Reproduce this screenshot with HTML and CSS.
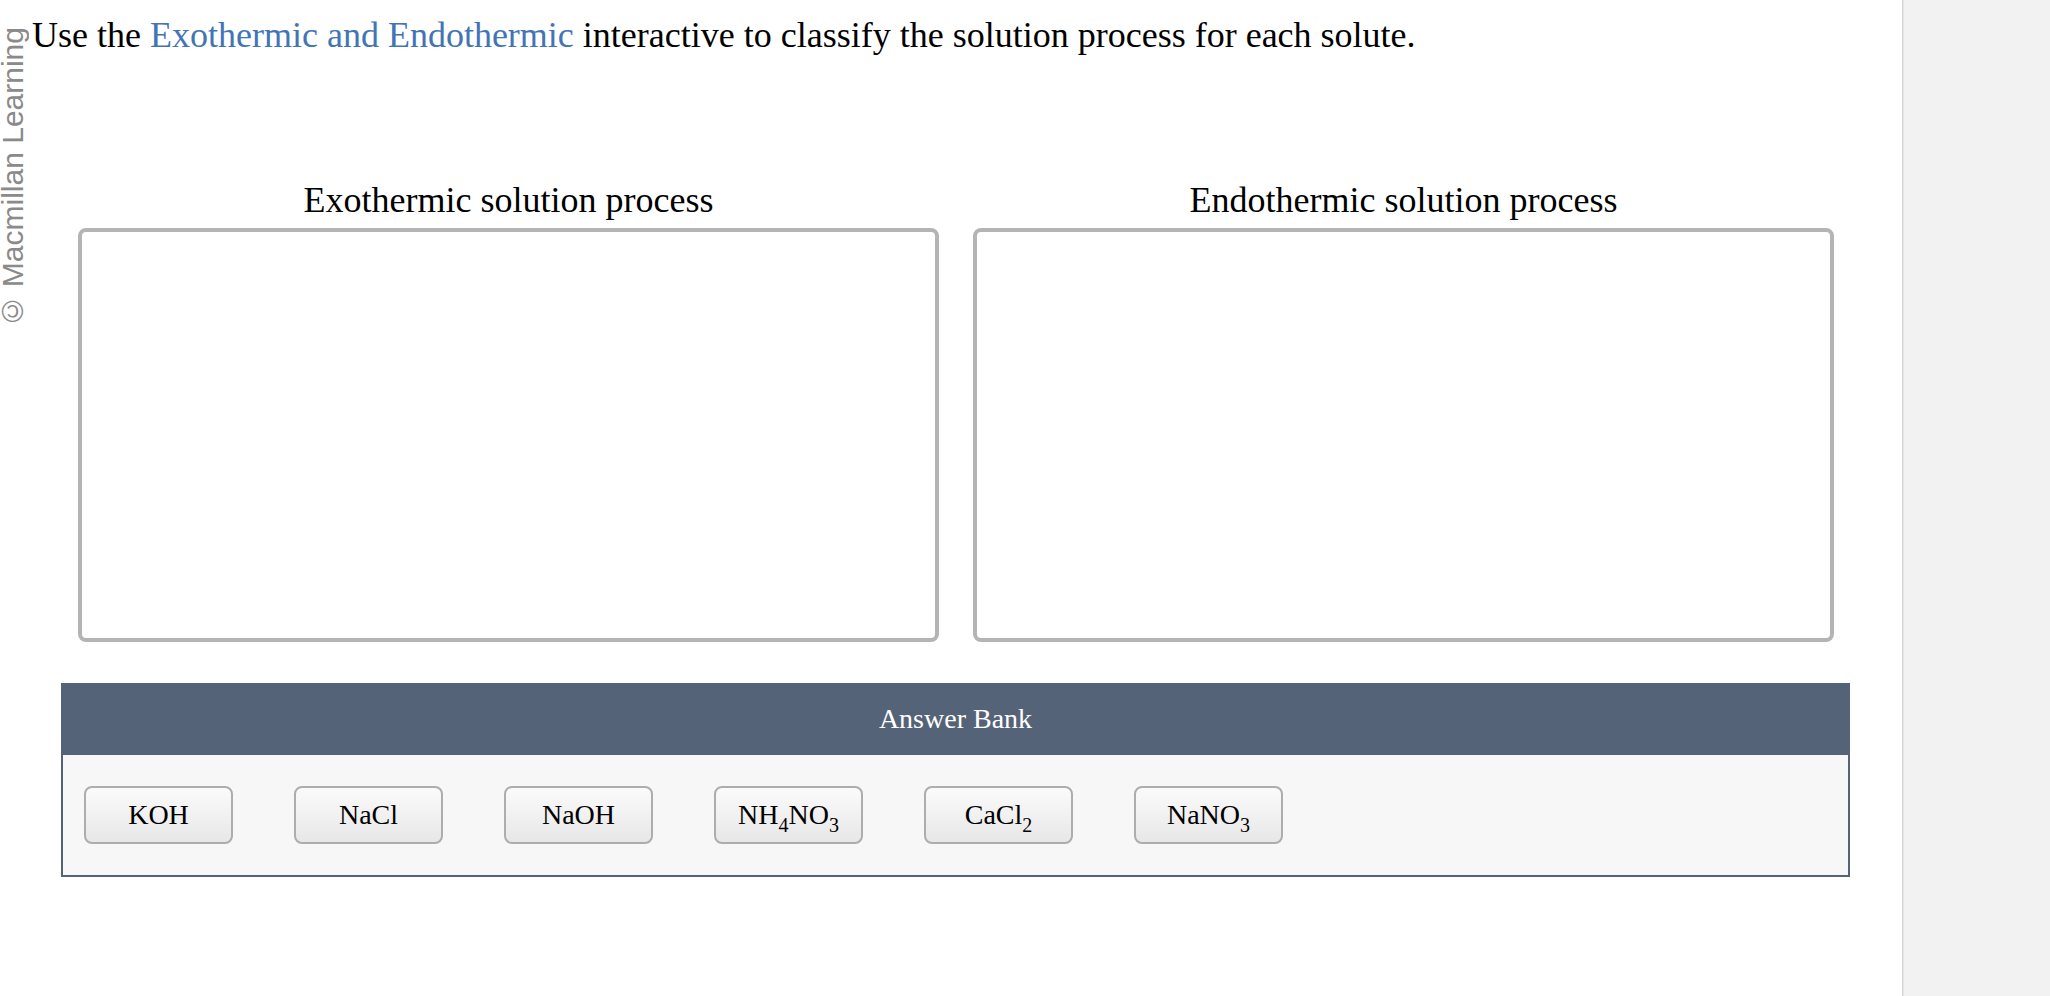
FILE: index.html
```html
<!DOCTYPE html>
<html lang="en">
<head>
    <meta charset="UTF-8">
    <meta name="viewport" content="width=device-width, initial-scale=1.0">
    <title>Exothermic and Endothermic</title>
    <link rel="stylesheet" href="styles.css">
</head>
<body>
    <div class="page">
        <main class="content">
            <div class="copyright">© Macmillan Learning</div>

            <p class="prompt">Use the <a href="#">Exothermic and Endothermic</a> interactive to classify the solution process for each solute.</p>

            <div class="bins">
                <section class="bin">
                    <h2>Exothermic solution process</h2>
                    <div class="drop"></div>
                </section>
                <section class="bin">
                    <h2>Endothermic solution process</h2>
                    <div class="drop"></div>
                </section>
            </div>

            <div class="bank">
                <div class="bank-head">Answer Bank</div>
                <div class="bank-items">
                    <button type="button" class="chip">KOH</button>
                    <button type="button" class="chip">NaCl</button>
                    <button type="button" class="chip">NaOH</button>
                    <button type="button" class="chip">NH<sub>4</sub>NO<sub>3</sub></button>
                    <button type="button" class="chip">CaCl<sub>2</sub></button>
                    <button type="button" class="chip">NaNO<sub>3</sub></button>
                </div>
            </div>
        </main>
        <aside class="rail"></aside>
    </div>
</body>
</html>
```

FILE: styles.css
```css
html, body {
    margin: 0;
    height: 100%;
    background-color: #fff;
}
body {
    font-family: "Liberation Serif", "Times New Roman", serif;
    color: #000;
}
.page {
    display: flex;
    height: 100%;
}
.content {
    position: relative;
    flex: 1;
    padding: 14px 0 0 0;
}
.rail {
    width: 147px;
    background-color: #f2f2f2;
    border-left: 1px solid #d6d6d6;
    box-shadow: inset 1px 0 0 #e6e6e6;
}

/* watermark down the left edge, reads bottom to top */
.copyright {
    position: absolute;
    left: -2px;
    top: 27px;
    writing-mode: vertical-rl;
    transform: rotate(180deg);
    font-family: "Liberation Sans", Arial, sans-serif;
    font-size: 30px;
    line-height: 30px;
    color: #8a8a8a;
    white-space: nowrap;
}

.prompt {
    margin: 0 0 0 32px;
    font-size: 36px;
    line-height: 42px;
}
.prompt a {
    color: #4275b5;
    text-decoration: none;
}

.bins {
    display: flex;
    gap: 34px;
    margin: 123px 0 0 78px;
    width: 1756px;
}
.bin {
    flex: 1;
}
.bin h2 {
    margin: 0 0 7px 0;
    font-size: 36px;
    line-height: 42px;
    font-weight: normal;
    text-align: center;
}
.drop {
    height: 406px;
    border: 4px solid #b4b4b4;
    border-radius: 8px;
    background-color: #fff;
}

.bank {
    margin: 41px 0 0 61px;
    width: 1785px;
    border: 2px solid #556379;
    border-top: none;
}
.bank-head {
    height: 72px;
    line-height: 72px;
    background-color: #556379;
    color: #fff;
    font-size: 28px;
    text-align: center;
}
.bank-items {
    display: flex;
    gap: 61px;
    padding: 31px 21px 31px;
    background-color: #f7f7f7;
}
.chip {
    width: 149px;
    height: 58px;
    padding: 0;
    border: 2px solid #adadad;
    border-radius: 8px;
    background: linear-gradient(#fbfbfb, #e7e7e7);
    font-family: "Liberation Serif", "Times New Roman", serif;
    font-size: 28px;
    color: #000;
}
.chip sub {
    font-size: 20px;
    line-height: 0;
    vertical-align: -8px;
}
```
